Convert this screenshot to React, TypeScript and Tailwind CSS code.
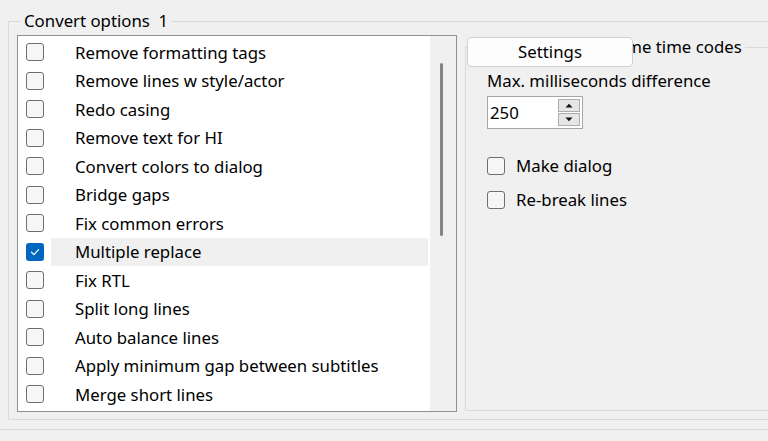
import React from "react";

const options = [
  { label: "Remove formatting tags", checked: false },
  { label: "Remove lines w style/actor", checked: false },
  { label: "Redo casing", checked: false },
  { label: "Remove text for HI", checked: false },
  { label: "Convert colors to dialog", checked: false },
  { label: "Bridge gaps", checked: false },
  { label: "Fix common errors", checked: false },
  { label: "Multiple replace", checked: true, selected: true },
  { label: "Fix RTL", checked: false },
  { label: "Split long lines", checked: false },
  { label: "Auto balance lines", checked: false },
  { label: "Apply minimum gap between subtitles", checked: false },
  { label: "Merge short lines", checked: false },
];

// windows 11 style check box
const CheckBox = ({ checked }: { checked?: boolean }) =>
  checked ? (
    <div className="w-[18px] h-[18px] rounded-[3px] bg-[#0067c0] flex items-center justify-center shrink-0">
      <svg width="12" height="12" viewBox="0 0 12 12" fill="none">
        <path d="M2.5 6.2 L5 8.6 L9.6 3.6" stroke="#ffffff" strokeWidth="1.2" strokeLinecap="round" strokeLinejoin="round" />
      </svg>
    </div>
  ) : (
    <div className="w-[18px] h-[18px] rounded-[3px] border border-[#6e6e6e] bg-[#f6f6f6] shrink-0" />
  );

export default function App() {
  return (
    <div
      className="w-[768px] h-[441px] bg-[#f0f0f0] overflow-hidden text-black text-[16.8px]"
      style={{ fontFamily: '"Noto Sans", "Open Sans", sans-serif' }}
    >
      {/* Convert options group */}
      <div className="relative mt-[21px] ml-[8px] w-[800px] h-[399px] border-t border-l border-b border-[#dadada]">
        <div className="absolute left-[12px] top-[-13px] px-[3px] bg-[#f0f0f0] leading-[24px]">
          Convert options&nbsp; 1
        </div>

        <div className="flex pt-[13px] pl-[8px]">
          {/* list box */}
          <div className="w-[440px] h-[377px] border border-[#8c9099] bg-white flex">
            <div className="flex-1 pt-[2px]">
              {options.map((o) => (
                <div key={o.label} className="h-[28.5px] flex items-center">
                  <div className="w-[33px] pl-[8px] flex items-center">
                    <CheckBox checked={o.checked} />
                  </div>
                  <div
                    className={
                      o.selected
                        ? "flex-1 h-full flex items-center pl-[24px] bg-[#f0f0f0]"
                        : "flex-1 h-full flex items-center pl-[24px]"
                    }
                  >
                    {o.label}
                  </div>
                </div>
              ))}
            </div>
            {/* scroll bar */}
            <div className="w-[26px] ml-[2px] bg-[#f0f0f0] flex justify-center pt-[27px]">
              <div className="w-[3px] h-[173px] rounded-full bg-[#858585] mr-[4px]" />
            </div>
          </div>

          {/* merge same time codes group */}
          <div className="relative ml-[8px] mt-[12px] w-[320px] h-[364px] border-t border-l border-b border-[#dadada]">
            <div className="absolute left-[5px] top-[-13px] px-[3px] bg-[#f0f0f0] leading-[24px] whitespace-nowrap">
              Merge lines with same time codes
            </div>
            <button className="absolute left-[1px] top-[-11px] w-[166px] h-[30px] rounded-[4px] border border-[#d0d0d0] bg-[#fdfdfd]">
              Settings
            </button>

            <div className="pl-[21px] pt-[22px] flex flex-col">
              <div className="leading-[22px]">Max. milliseconds difference</div>
              <div className="mt-[4px] w-[96px] h-[33px] border border-[#a6a6a6] bg-white flex items-center justify-between pl-[2px] pr-[2px]">
                <span>250</span>
                <div className="flex flex-col gap-[1px]">
                  <div className="w-[22px] h-[13px] bg-[#e6e6e6] border border-[#adadad] flex items-center justify-center">
                    <svg width="8" height="5" viewBox="0 0 8 5">
                      <path d="M0.5 4.5 L4 0.8 L7.5 4.5 Z" fill="#111" />
                    </svg>
                  </div>
                  <div className="w-[22px] h-[13px] bg-[#e6e6e6] border border-[#adadad] flex items-center justify-center">
                    <svg width="8" height="5" viewBox="0 0 8 5">
                      <path d="M0.5 0.5 L4 4.2 L7.5 0.5 Z" fill="#111" />
                    </svg>
                  </div>
                </div>
              </div>

              <div className="mt-[27px] flex items-center gap-[11px] h-[20px]">
                <CheckBox />
                <span>Make dialog</span>
              </div>
              <div className="mt-[14px] flex items-center gap-[11px] h-[20px]">
                <CheckBox />
                <span>Re-break lines</span>
              </div>
            </div>
          </div>
        </div>
      </div>

      {/* bottom separator */}
      <div className="mt-[9px] border-t border-[#dadada]" />
    </div>
  );
}
